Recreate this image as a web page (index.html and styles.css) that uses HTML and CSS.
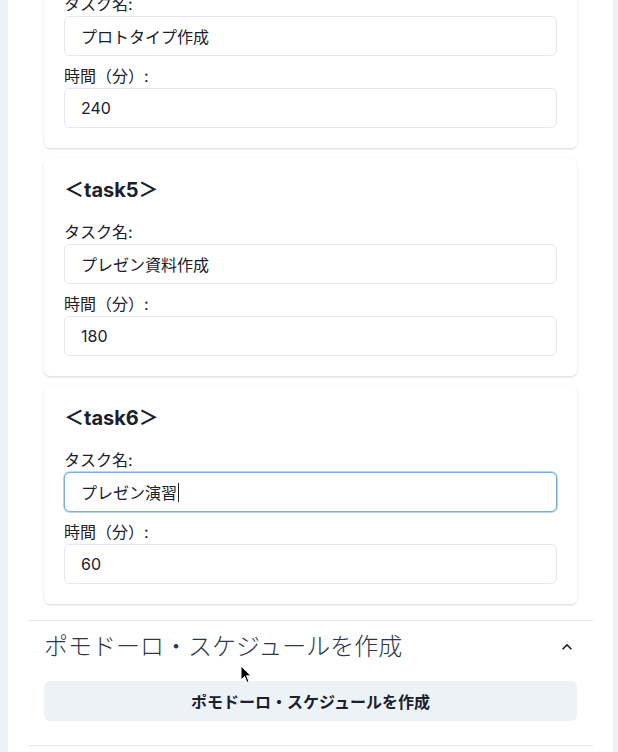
FILE: index.html
```html
<!DOCTYPE html>
<html lang="ja">
<head>
<meta charset="utf-8">
<title>ポモドーロ</title>
<link rel="stylesheet" href="styles.css">
</head>
<body>
<div class="app">
  <div class="tasks-panel">
    <div class="cards">
      <div class="card">
        <h3 class="card-title">＜task4＞</h3>
        <label class="field-label">タスク名:</label>
        <input class="field" type="text" value="プロトタイプ作成">
        <label class="field-label second">時間（分）:</label>
        <input class="field" type="text" value="240">
      </div>
      <div class="card">
        <h3 class="card-title">＜task5＞</h3>
        <label class="field-label">タスク名:</label>
        <input class="field" type="text" value="プレゼン資料作成">
        <label class="field-label second">時間（分）:</label>
        <input class="field" type="text" value="180">
      </div>
      <div class="card">
        <h3 class="card-title">＜task6＞</h3>
        <label class="field-label">タスク名:</label>
        <div class="field-wrap">
          <input class="field focused" type="text" value="プレゼン演習">
          <span class="caret"></span>
        </div>
        <label class="field-label second">時間（分）:</label>
        <input class="field" type="text" value="60">
      </div>
    </div>
  </div>
  <div class="acc-item">
    <div class="acc-head">
      <span class="acc-title">ポモドーロ・スケジュールを作成</span>
      <svg class="acc-icon" viewBox="0 0 24 24" width="20" height="20"><path d="M7.41 15.41L12 10.83l4.59 4.58L18 14l-6-6-6 6z" fill="#1a202c"/></svg>
    </div>
    <div class="acc-panel">
      <button class="make-btn">ポモドーロ・スケジュールを作成</button>
    </div>
  </div>
  <svg class="cursor" width="12" height="19" viewBox="0 0 12 19"><path d="M1 1 L1 15 L4.5 11.5 L7 17.5 L9 16.6 L6.6 10.8 L11 10.8 Z" fill="#000" stroke="#fff" stroke-width="1"/></svg>
</div>
</body>
</html>
```
FILE: styles.css
```css
html, body {
  margin: 0;
  padding: 0;
}
body {
  background: #edf2f7;
  font-family: Inter, "Noto Sans CJK JP", "Noto Sans", sans-serif;
  color: #1a202c;
  overflow: hidden;
}
.app {
  position: relative;
  box-sizing: border-box;
  width: 605px;
  margin-left: 8px;
  margin-top: -70px;
  background: #fff;
  padding: 0 20px;
  min-height: calc(100vh + 70px);
}
.tasks-panel {
  padding: 0 16px 16px;
}
.cards {
  display: flex;
  flex-direction: column;
  gap: 10px;
}
.card {
  display: flex;
  flex-direction: column;
  padding: 20px;
  border-radius: 6px;
  background: #fff;
  box-shadow: 0 1px 3px rgba(0, 0, 0, 0.10), 0 1px 2px rgba(0, 0, 0, 0.06);
}
.card-title {
  margin: 0 0 18px;
  font-size: 20px;
  line-height: 24px;
  font-weight: 700;
  color: #1a202c;
}
.field-label {
  font-size: 16px;
  line-height: 24px;
  color: #1a202c;
}
.field-label.second {
  margin-top: 8px;
}
.field-wrap {
  position: relative;
}
.field {
  display: block;
  box-sizing: border-box;
  width: 100%;
  height: 40px;
  margin: 0;
  padding: 0 16px;
  border: 1px solid #e2e8f0;
  border-radius: 6px;
  background: #fff;
  font-family: Inter, "Noto Sans CJK JP", sans-serif;
  font-size: 16px;
  color: #1a202c;
  outline: none;
}
.field.focused {
  border-color: #74ace0;
  box-shadow: 0 0 0 1px #b9d6f0;
}
.caret {
  position: absolute;
  left: 114px;
  top: 11px;
  width: 1px;
  height: 19px;
  background: #1a202c;
}
.acc-item {
  border-top: 1px solid #e2e8f0;
  border-bottom: 1px solid #e2e8f0;
}
.acc-head {
  display: flex;
  align-items: center;
  justify-content: space-between;
  padding: 8px 16px;
}
.acc-title {
  font-size: 24px;
  line-height: 36px;
  font-weight: 300;
  color: #2d3748;
}
.acc-icon {
  display: block;
}
.acc-panel {
  padding: 8px 16px 24px;
}
.make-btn {
  display: block;
  width: 100%;
  height: 40px;
  border: none;
  border-radius: 6px;
  background: #edf2f7;
  font-family: Inter, "Noto Sans CJK JP", sans-serif;
  font-size: 16px;
  font-weight: 700;
  color: #1a202c;
}
.cursor {
  position: absolute;
  left: 232px;
  top: 735px;
}
```
